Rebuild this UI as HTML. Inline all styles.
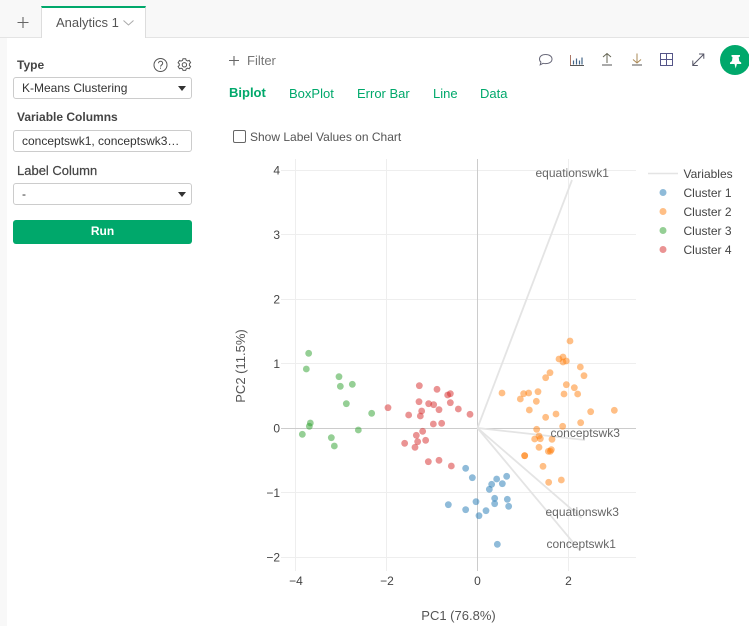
<!DOCTYPE html>
<html>
<head>
<meta charset="utf-8">
<style>
html,body{margin:0;padding:0;width:749px;height:626px;overflow:hidden;background:#fff;font-family:"Liberation Sans",sans-serif;color:#444}
.abs{position:absolute;white-space:nowrap}
#wrap{position:relative;width:749px;height:626px;overflow:hidden}
.sel{position:absolute;left:13px;width:177px;height:20px;border:1px solid #ccc;border-radius:3px;background:#fff;font-size:12px;line-height:20px;color:#333;text-indent:8px}
.sel i{position:absolute;right:5px;top:8px;width:0;height:0;border-left:4.5px solid transparent;border-right:4.5px solid transparent;border-top:5px solid #333}
.lab{font-size:12px;font-weight:bold;color:#444;left:17px}
.tab{font-size:13px;line-height:15px;color:#00a86b;top:86px}
svg text{font-family:"Liberation Sans",sans-serif}
.p circle{r:10.2px}
</style>
</head>
<body>
<div id="wrap">
<div class="abs" style="left:0;top:0;width:749px;height:37px;background:#f8f8f8;border-bottom:1px solid #e4e4e4"></div>
<div class="abs" style="left:0;top:38px;width:7px;height:588px;background:#f8f8f8"></div>
<div class="abs" style="left:41px;top:6px;width:103px;height:30px;background:#fff;border-left:1px solid #ddd;border-right:1px solid #ddd;border-top:2px solid #00a86b"></div>
<div class="abs" style="left:56px;top:15px;font-size:13px;line-height:16px;color:#555">Analytics 1</div>
<svg class="abs" style="left:0;top:0" width="150" height="38"><path d="M23 17v11M17.500 22.500h11" stroke="#666" stroke-width="1.100" fill="none"/><path d="M123.500 20.500l5 4.500 5-4.500" stroke="#aaa" stroke-width="1" fill="none"/></svg>

<div class="abs lab" style="top:58px">Type</div>
<svg class="abs" style="left:150px;top:55px" width="45" height="20" fill="none" stroke="#555">
<circle cx="10.500" cy="10" r="6.500" stroke-width="1"/>
<path d="M8.500 8.300c0-2.700 4.200-2.700 4.200 0 0 1.600-2.100 1.700-2.100 3.300" stroke-width="1"/><path d="M10.500 12.600v1.200" stroke-width="1"/>
<path d="M33 3.800l2.700 0 .5 1.500 1.500.7 1.500-.6 1.400 2.300-1.200 1.100v1.600l1.200 1.100-1.400 2.300-1.500-.6-1.500.7-.5 1.500h-2.700l-.5-1.500-1.500-.7-1.500.6-1.400-2.300 1.200-1.100V8.900l-1.200-1.100 1.400-2.300 1.500.6 1.500-.7z" stroke-width="1"/><circle cx="34.400" cy="9.800" r="2.200" stroke-width="1"/>
</svg>
<div class="sel" style="top:77px">K-Means Clustering<i></i></div>
<div class="abs lab" style="top:110px">Variable Columns</div>
<div class="sel" style="top:130px">conceptswk1, conceptswk3…</div>
<div class="abs" style="left:17px;top:163px;font-size:13px;line-height:15px;color:#444;-webkit-text-stroke:.2px #444">Label Column</div>
<div class="sel" style="top:183px">-<i></i></div>
<div class="abs" style="left:13px;top:220px;width:179px;height:24px;background:#00a86b;border-radius:3px;color:#fff;font-size:12px;font-weight:bold;line-height:23px;text-align:center">Run</div>

<svg class="abs" style="left:225px;top:50px" width="20" height="20"><path d="M9 6v9.500M4 10.500h10" stroke="#666" stroke-width="1.100" fill="none"/></svg>
<div class="abs" style="left:247px;top:53px;font-size:13px;line-height:16px;color:#777">Filter</div>

<svg class="abs" style="left:0;top:0" width="749" height="100" fill="none">
<path d="M545.500 54.500c4 0 6.500 1.900 6.500 4.600s-2.500 4.500-6.500 4.500c-1 0-1.700-.1-2.400-.3l-2.900 1.500.7-2.700c-1-.8-1.400-1.800-1.400-3 0-2.700 2.500-4.600 6-4.600z" stroke="#667" stroke-width="1"/>
<path d="M570.500 55v10.500" stroke="#a76" stroke-width="1"/><path d="M570 65.500h14" stroke="#555" stroke-width="1"/>
<path d="M573.500 64.500v-4M576.500 64.500v-6M579.500 64.500v-4M582 64.500v-7" stroke="#468" stroke-width="1.200"/>
<path d="M603 57l4-3.500 4 3.500M607 54v9" stroke="#665" stroke-width="1"/><path d="M602 65h10" stroke="#555" stroke-width="1"/>
<path d="M633 59.500l4 3.500 4-3.500M637 53.500v9" stroke="#a85" stroke-width="1"/><path d="M632 65h10" stroke="#555" stroke-width="1"/>
<path d="M660.500 53.500h12v12h-12zM666.500 53.500v12M660.500 59.500h12" stroke="#558" stroke-width="1"/>
<path d="M692.500 65.500l11-11M699 54h4.800v4.800M692.800 60.500v5h5" stroke="#556" stroke-width="1"/>
</svg>
<div class="abs" style="left:720px;top:45px;width:30px;height:30px;border-radius:50%;background:#00a86b"></div>
<svg class="abs" style="left:720px;top:45px" width="29" height="30"><path d="M10.500 10h8.500v1.500l-1.300.6.500 3.900 2 1.600v1.400h-4.300l-1.200 4.500-1.200-4.500H9v-1.400l2-1.600.5-3.900-1-.6z" fill="#fff" transform="translate(1 0)"/></svg>

<div class="abs" style="left:229px;top:85px;font-size:13px;font-weight:bold;color:#00a86b;line-height:15px">Biplot</div>
<div class="abs tab" style="left:289px">BoxPlot</div>
<div class="abs tab" style="left:357px">Error Bar</div>
<div class="abs tab" style="left:433px">Line</div>
<div class="abs tab" style="left:480px">Data</div>

<div class="abs" style="left:233px;top:130px;width:11px;height:11px;border:1px solid #666;border-radius:2px;background:#fff"></div>
<div class="abs" style="left:250px;top:130px;font-size:12px;line-height:14px;color:#555">Show Label Values on Chart</div>

<svg class="abs" style="left:0;top:0" width="749" height="626">
<g stroke="#eee" stroke-width="1" fill="none">
<path d="M295.500 159V571M386.500 159V571M568.500 159V571"/>
<path d="M281 170.500H636M281 234.500H636M281 299.500H636M281 363.500H636M281 492.500H636M281 557.500H636"/>
</g>
<path d="M477.500 159V571M281 428.500H636" stroke="#ccc" stroke-width="1" fill="none"/>
<g stroke="#e4e4e4" stroke-width="1.800" fill="none">
<path d="M477.500 428L572 180"/>
<path d="M477.500 428L585 440"/>
<path d="M477.500 428L581.700 518"/>
<path d="M477.500 428L580 550.700"/>
</g>
<g class="p" transform="translate(280 340) scale(.33333)" fill="#2ca02c" fill-opacity=".5">
<circle cx="86" cy="40"/><circle cx="79" cy="87"/><circle cx="177" cy="110"/><circle cx="181" cy="139"/><circle cx="217" cy="133"/><circle cx="199" cy="191"/><circle cx="275" cy="220"/><circle cx="91" cy="249"/><circle cx="88" cy="259"/><circle cx="67" cy="283"/><circle cx="154" cy="293"/><circle cx="163" cy="318"/><circle cx="235" cy="270"/>
</g>
<g class="p" transform="translate(280 340) scale(.33333)" fill="#d62728" fill-opacity=".5">
<circle cx="418" cy="137"/><circle cx="471" cy="148"/><circle cx="503" cy="165"/><circle cx="511" cy="161"/><circle cx="417" cy="185"/><circle cx="446" cy="191"/><circle cx="461" cy="194"/><circle cx="511" cy="188"/><circle cx="477" cy="209"/><circle cx="535" cy="207"/><circle cx="570" cy="223"/><circle cx="324" cy="203"/><circle cx="386" cy="225"/><circle cx="425" cy="213"/><circle cx="421" cy="228"/><circle cx="460" cy="252"/><circle cx="485" cy="250"/><circle cx="428" cy="274"/><circle cx="409" cy="286"/><circle cx="437" cy="301"/><circle cx="413" cy="305"/><circle cx="374" cy="310"/><circle cx="405" cy="322"/><circle cx="445" cy="365"/><circle cx="477" cy="361"/><circle cx="514" cy="378"/>
</g>
<g class="p" transform="translate(480 330) scale(.33333)" fill="#ff7f0e" fill-opacity=".5">
<circle cx="270" cy="33"/><circle cx="237" cy="87"/><circle cx="249" cy="81"/><circle cx="249" cy="96"/><circle cx="259" cy="93"/><circle cx="301" cy="111"/><circle cx="312" cy="137"/><circle cx="210" cy="128"/><circle cx="197" cy="143"/><circle cx="259" cy="164"/><circle cx="283" cy="173"/><circle cx="252" cy="192"/><circle cx="293" cy="192"/><circle cx="66" cy="189"/><circle cx="131" cy="191"/><circle cx="146" cy="189"/><circle cx="174" cy="185"/><circle cx="121" cy="207"/><circle cx="169" cy="214"/><circle cx="148" cy="240"/><circle cx="197" cy="262"/><circle cx="228" cy="252"/><circle cx="332" cy="245"/><circle cx="403" cy="241"/><circle cx="302" cy="278"/><circle cx="248" cy="289"/><circle cx="170" cy="298"/><circle cx="177" cy="318"/><circle cx="164" cy="327"/><circle cx="181" cy="326"/><circle cx="216" cy="328"/><circle cx="177" cy="352"/><circle cx="214" cy="359"/><circle cx="205" cy="364"/><circle cx="211" cy="364"/><circle cx="134" cy="377"/>
</g>
<g class="p" transform="translate(420 450) scale(.33333)" fill="#ff7f0e" fill-opacity=".5">
<circle cx="314" cy="17"/><circle cx="369" cy="49"/><circle cx="386" cy="97"/><circle cx="424" cy="90"/>
</g>
<g class="p" transform="translate(420 450) scale(.33333)" fill="#1f77b4" fill-opacity=".5">
<circle cx="137" cy="55"/><circle cx="157" cy="83"/><circle cx="260" cy="79"/><circle cx="230" cy="87"/><circle cx="247" cy="101"/><circle cx="215" cy="103"/><circle cx="208" cy="118"/><circle cx="224" cy="145"/><circle cx="262" cy="148"/><circle cx="168" cy="155"/><circle cx="224" cy="161"/><circle cx="85" cy="164"/><circle cx="266" cy="169"/><circle cx="137" cy="179"/><circle cx="198" cy="182"/><circle cx="177" cy="197"/><circle cx="232" cy="283"/>
</g>
<g font-size="12" fill="#666">
<text x="535.500" y="177">equationswk1</text>
<text x="550.500" y="437">conceptswk3</text>
<text x="545.500" y="516">equationswk3</text>
<text x="546.500" y="548">conceptswk1</text>
</g>
<g font-size="12" fill="#444" text-anchor="end">
<text x="280" y="174.500">4</text><text x="280" y="239">3</text><text x="280" y="303.500">2</text><text x="280" y="368">1</text><text x="280" y="432.500">0</text><text x="280" y="497">−1</text><text x="280" y="561.500">−2</text>
</g>
<g font-size="12" fill="#444" text-anchor="middle">
<text x="296" y="585">−4</text><text x="387" y="585">−2</text><text x="477.500" y="585">0</text><text x="568.500" y="585">2</text>
</g>
<text x="458.500" y="620" font-size="13" fill="#555" text-anchor="middle">PC1 (76.8%)</text>
<text transform="translate(245 366) rotate(-90)" font-size="13" fill="#555" text-anchor="middle">PC2 (11.5%)</text>
<path d="M648 173.500H678" stroke="#e4e4e4" stroke-width="1.500"/>
<g fill-opacity=".5">
<circle cx="663" cy="192.500" r="3.500" fill="#1f77b4"/>
<circle cx="663" cy="211.500" r="3.500" fill="#ff7f0e"/>
<circle cx="663" cy="230.500" r="3.500" fill="#2ca02c"/>
<circle cx="663" cy="249.500" r="3.500" fill="#d62728"/>
</g>
<g font-size="12" fill="#444">
<text x="683.500" y="178">Variables</text>
<text x="683.500" y="197">Cluster 1</text>
<text x="683.500" y="216">Cluster 2</text>
<text x="683.500" y="235">Cluster 3</text>
<text x="683.500" y="254">Cluster 4</text>
</g>
</svg>
</div>
</body>
</html>
